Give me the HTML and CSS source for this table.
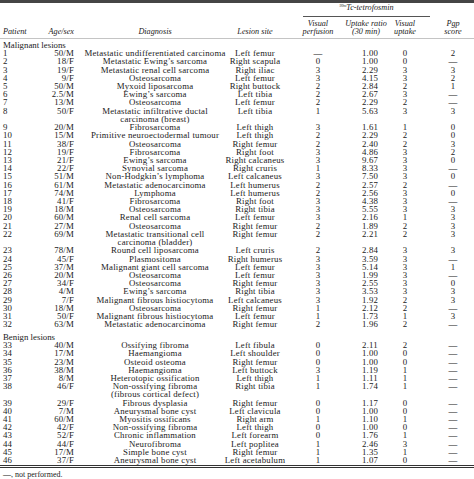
FILE: index.html
```html
<!DOCTYPE html>
<html lang="en">
<head>
<meta charset="utf-8">
<title>99mTc-tetrofosmin uptake in bone lesions</title>
<link rel="stylesheet" href="styles.css">
</head>
<body>
<div class="tbl">
  <div class="top"></div>
  <div class="head">
    <div class="tc-wrap"><div class="tc"><sup>99m</sup>Tc-tetrofosmin</div></div>
    <span class="h h1">Patient</span>
    <span class="h h2">Age/sex</span>
    <span class="h h3">Diagnosis</span>
    <span class="h h4">Lesion site</span>
    <span class="h h5"><span class="m">Visual<br>perfusion</span></span>
    <span class="h h6"><span class="m">Uptake ratio<br>(30 min)</span></span>
    <span class="h h7"><span class="m">Visual<br>uptake</span></span>
    <span class="h h8"><span class="m">Pgp<br>score</span></span>
  </div>

  <div class="sec">Malignant lesions</div>
  <div class="r"><span>1</span><span>50/M</span><span>Metastatic undifferentiated carcinoma</span><span>Left femur</span><span>—</span><span>1.00</span><span>0</span><span>2</span></div>
  <div class="r"><span>2</span><span>18/F</span><span>Metastatic Ewing’s sarcoma</span><span>Right scapula</span><span>0</span><span>1.00</span><span>0</span><span>—</span></div>
  <div class="r"><span>3</span><span>19/F</span><span>Metastatic renal cell sarcoma</span><span>Right iliac</span><span>3</span><span>2.29</span><span>3</span><span>3</span></div>
  <div class="r"><span>4</span><span>9/F</span><span>Osteosarcoma</span><span>Left femur</span><span>3</span><span>4.15</span><span>3</span><span>2</span></div>
  <div class="r"><span>5</span><span>50/M</span><span>Myxoid liposarcoma</span><span>Right buttock</span><span>2</span><span>2.84</span><span>2</span><span>1</span></div>
  <div class="r"><span>6</span><span>2.5/M</span><span>Ewing’s sarcoma</span><span>Left tibia</span><span>2</span><span>2.67</span><span>3</span><span>—</span></div>
  <div class="r"><span>7</span><span>13/M</span><span>Osteosarcoma</span><span>Left femur</span><span>2</span><span>2.29</span><span>2</span><span>—</span></div>
  <div class="r"><span>8</span><span>50/F</span><span><span class="m">Metastatic infiltrative ductal<br>carcinoma (breast)</span></span><span>Left tibia</span><span>1</span><span>5.63</span><span>3</span><span>3</span></div>
  <div class="r"><span>9</span><span>20/M</span><span>Fibrosarcoma</span><span>Left thigh</span><span>3</span><span>1.61</span><span>1</span><span>0</span></div>
  <div class="r"><span>10</span><span>15/M</span><span>Primitive neuroectodermal tumour</span><span>Left thigh</span><span>2</span><span>2.29</span><span>2</span><span>0</span></div>
  <div class="r"><span>11</span><span>38/F</span><span>Osteosarcoma</span><span>Right femur</span><span>2</span><span>2.40</span><span>2</span><span>3</span></div>
  <div class="r"><span>12</span><span>19/F</span><span>Fibrosarcoma</span><span>Right foot</span><span>3</span><span>4.86</span><span>3</span><span>2</span></div>
  <div class="r"><span>13</span><span>21/F</span><span>Ewing’s sarcoma</span><span>Right calcaneus</span><span>3</span><span>9.67</span><span>3</span><span>0</span></div>
  <div class="r"><span>14</span><span>22/F</span><span>Synovial sarcoma</span><span>Right cruris</span><span>1</span><span>8.33</span><span>3</span><span>—</span></div>
  <div class="r"><span>15</span><span>51/M</span><span>Non-Hodgkin’s lymphoma</span><span>Left calcaneus</span><span>3</span><span>7.50</span><span>3</span><span>0</span></div>
  <div class="r"><span>16</span><span>61/M</span><span>Metastatic adenocarcinoma</span><span>Left humerus</span><span>2</span><span>2.57</span><span>2</span><span>—</span></div>
  <div class="r"><span>17</span><span>74/M</span><span>Lymphoma</span><span>Left humerus</span><span>2</span><span>2.56</span><span>3</span><span>0</span></div>
  <div class="r"><span>18</span><span>41/F</span><span>Fibrosarcoma</span><span>Right foot</span><span>3</span><span>4.38</span><span>3</span><span>—</span></div>
  <div class="r"><span>19</span><span>18/M</span><span>Osteosarcoma</span><span>Right tibia</span><span>3</span><span>5.55</span><span>3</span><span>3</span></div>
  <div class="r"><span>20</span><span>60/M</span><span>Renal cell sarcoma</span><span>Left femur</span><span>3</span><span>2.16</span><span>1</span><span>3</span></div>
  <div class="r"><span>21</span><span>27/M</span><span>Osteosarcoma</span><span>Right femur</span><span>2</span><span>1.89</span><span>2</span><span>3</span></div>
  <div class="r"><span>22</span><span>69/M</span><span><span class="m">Metastatic transitional cell<br>carcinoma (bladder)</span></span><span>Right femur</span><span>2</span><span>2.21</span><span>2</span><span>3</span></div>
  <div class="r"><span>23</span><span>78/M</span><span>Round cell liposarcoma</span><span>Left cruris</span><span>2</span><span>2.84</span><span>3</span><span>3</span></div>
  <div class="r"><span>24</span><span>45/F</span><span>Plasmositoma</span><span>Right humerus</span><span>3</span><span>3.59</span><span>3</span><span>—</span></div>
  <div class="r"><span>25</span><span>37/M</span><span>Malignant giant cell sarcoma</span><span>Left femur</span><span>3</span><span>5.14</span><span>3</span><span>1</span></div>
  <div class="r"><span>26</span><span>20/M</span><span>Osteosarcoma</span><span>Left femur</span><span>3</span><span>1.99</span><span>3</span><span>—</span></div>
  <div class="r"><span>27</span><span>34/F</span><span>Osteosarcoma</span><span>Right femur</span><span>3</span><span>2.55</span><span>3</span><span>0</span></div>
  <div class="r"><span>28</span><span>4/M</span><span>Ewing’s sarcoma</span><span>Right tibia</span><span>3</span><span>3.53</span><span>3</span><span>3</span></div>
  <div class="r"><span>29</span><span>7/F</span><span>Malignant fibrous histiocytoma</span><span>Left calcaneus</span><span>3</span><span>1.92</span><span>2</span><span>3</span></div>
  <div class="r"><span>30</span><span>18/M</span><span>Osteosarcoma</span><span>Right femur</span><span>1</span><span>2.12</span><span>2</span><span>—</span></div>
  <div class="r"><span>31</span><span>50/F</span><span>Malignant fibrous histiocytoma</span><span>Left femur</span><span>1</span><span>1.73</span><span>1</span><span>3</span></div>
  <div class="r"><span>32</span><span>63/M</span><span>Metastatic adenocarcinoma</span><span>Right femur</span><span>2</span><span>1.96</span><span>2</span><span>—</span></div>

  <div class="sec sec2">Benign lesions</div>
  <div class="r"><span>33</span><span>40/M</span><span>Ossifying fibroma</span><span>Left fibula</span><span>0</span><span>2.11</span><span>2</span><span>—</span></div>
  <div class="r"><span>34</span><span>17/M</span><span>Haemangioma</span><span>Left shoulder</span><span>0</span><span>1.00</span><span>0</span><span>—</span></div>
  <div class="r"><span>35</span><span>23/M</span><span>Osteoid osteoma</span><span>Right femur</span><span>0</span><span>1.00</span><span>0</span><span>—</span></div>
  <div class="r"><span>36</span><span>38/M</span><span>Haemangioma</span><span>Left buttock</span><span>3</span><span>1.19</span><span>1</span><span>—</span></div>
  <div class="r"><span>37</span><span>8/M</span><span>Heterotopic ossification</span><span>Left thigh</span><span>1</span><span>1.11</span><span>1</span><span>—</span></div>
  <div class="r"><span>38</span><span>46/F</span><span><span class="m">Non-ossifying fibroma<br>(fibrous cortical defect)</span></span><span>Right tibia</span><span>1</span><span>1.74</span><span>1</span><span>—</span></div>
  <div class="r"><span>39</span><span>29/F</span><span>Fibrous dysplasia</span><span>Right femur</span><span>0</span><span>1.17</span><span>0</span><span>—</span></div>
  <div class="r"><span>40</span><span>7/M</span><span>Aneurysmal bone cyst</span><span>Left clavicula</span><span>0</span><span>1.00</span><span>0</span><span>—</span></div>
  <div class="r"><span>41</span><span>60/M</span><span>Myositis ossificans</span><span>Right arm</span><span>1</span><span>1.10</span><span>1</span><span>—</span></div>
  <div class="r"><span>42</span><span>42/F</span><span>Non-ossifying fibroma</span><span>Left thigh</span><span>0</span><span>1.00</span><span>0</span><span>—</span></div>
  <div class="r"><span>43</span><span>52/F</span><span>Chronic inflammation</span><span>Left forearm</span><span>0</span><span>1.76</span><span>1</span><span>—</span></div>
  <div class="r"><span>44</span><span>44/F</span><span>Neurofibroma</span><span>Left poplitea</span><span>1</span><span>2.46</span><span>3</span><span>—</span></div>
  <div class="r"><span>45</span><span>17/M</span><span>Simple bone cyst</span><span>Right femur</span><span>1</span><span>1.35</span><span>1</span><span>—</span></div>
  <div class="r"><span>46</span><span>37/F</span><span>Aneurysmal bone cyst</span><span>Left acetabulum</span><span>1</span><span>1.07</span><span>0</span><span>—</span></div>

  <div class="bottom"></div>
  <p class="note">—, not performed.</p>
</div>
</body>
</html>
```

FILE: styles.css
```css
html, body {
  margin: 0;
  padding: 0;
  background: #ffffff;
}

body {
  font-family: "Liberation Serif", "Times New Roman", serif;
  font-size: 8.8px;
  color: #222222;
}

.tbl {
  width: 474px;
}

.top {
  height: 3px;
  background: #454545;
}

.head,
.r {
  display: grid;
  grid-template-columns: 42px 41px 144px 56px 70px 34px 36px 51px;
}

.head {
  grid-template-rows: auto auto;
  border-bottom: 1px solid #c4c4c4;
  font-style: italic;
  font-size: 8.2px;
}

.tc-wrap {
  grid-column: 5 / 9;
  grid-row: 1;
  padding-top: 0.5px;
}

.tc {
  margin-left: 20px;
  width: 127px;
  border-bottom: 1px solid #555555;
  line-height: 8.2px;
  padding-bottom: 4.3px;
  text-align: center;
  white-space: nowrap;
}

.tc sup {
  font-size: 4px;
  vertical-align: 3px;
  line-height: 0;
}

.h {
  grid-row: 2;
  display: flex;
  align-items: flex-end;
  justify-content: center;
  text-align: center;
  white-space: nowrap;
  line-height: 8.4px;
  padding-top: 2.8px;
  padding-bottom: 1.4px;
}

.h1 { justify-content: flex-start; padding-left: 3px; }
.h2 { justify-content: flex-end; padding-right: 9px; }
.h6 { padding-right: 8px; }
.h8 { padding-left: 9px; }

.sec {
  line-height: 8.22px;
  padding-left: 3px;
  margin-top: 1.9px;
}

.sec2 {
  margin-top: 4.3px;
}

.r {
  line-height: 8.22px;
  align-items: start;
  letter-spacing: 0.2px;
}

.r > span {
  display: flex;
  justify-content: center;
  text-align: center;
  white-space: nowrap;
}

.r > span:nth-child(1) {
  justify-content: flex-start;
  padding-left: 3px;
}

.r > span:nth-child(2) {
  justify-content: flex-end;
  padding-right: 9px;
}

.r > span:nth-child(8) {
  padding-left: 9px;
}

.bottom {
  margin-top: 0.8px;
  border-top: 3px double #333333;
}

.note {
  margin: 3px 0 0;
  padding-left: 3px;
  line-height: 8.2px;
  font-size: 8px;
}
```
